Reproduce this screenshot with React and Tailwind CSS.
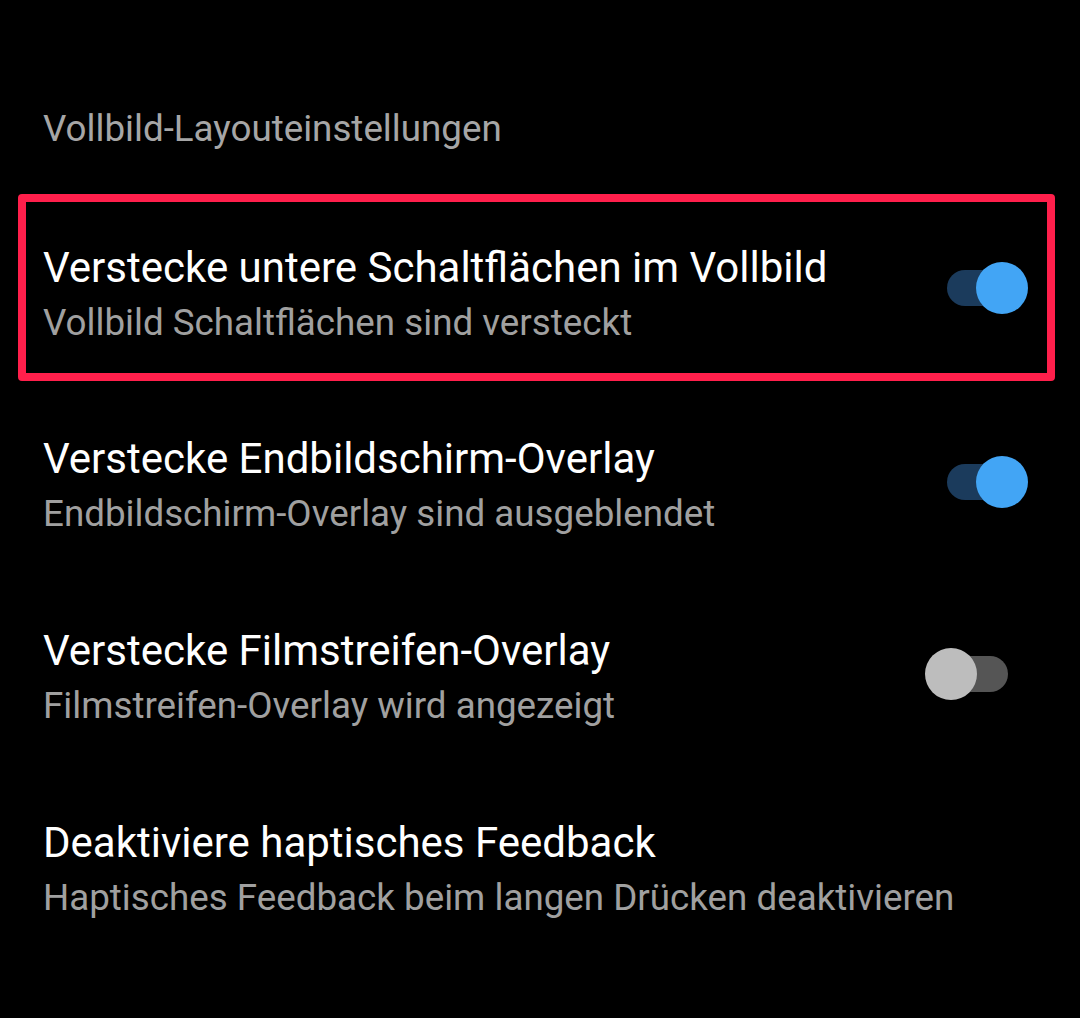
import React from 'react';

function Toggle({ on }) {
  return (
    <div className="relative w-[103px] h-[52px] shrink-0">
      <div className={`absolute left-[22px] top-[8px] w-[61px] h-[36px] rounded-full ${on ? 'bg-[#1b3b5c]' : 'bg-[#555555]'}`} />
      <div className={`absolute top-0 w-[52px] h-[52px] rounded-full ${on ? 'left-[51px] bg-[#42a5f5]' : 'left-0 bg-[#bdbdbd]'}`} />
    </div>
  );
}

function Row({ title, sub, toggle, on, shift = 'pt-[6px]' }) {
  return (
    <div className="flex items-center justify-between h-full">
      <div className={`flex flex-col ${shift}`}>
        <span className="text-white text-[42px] leading-[50px]">{title}</span>
        <span className="mt-[7px] text-[#a0a0a0] text-[36.75px] leading-[46px]">{sub}</span>
      </div>
      {toggle && <Toggle on={on} />}
    </div>
  );
}

export default function App() {
  return (
    <div className="w-[1080px] h-[1018px] bg-black overflow-hidden" style={{ fontFamily: 'Roboto, "Noto Sans", sans-serif' }}>
      <div className="h-[194px] pt-[107px] pl-[43px] text-[#a6a6a6] text-[36.75px] leading-[44px]">
        Vollbild-Layouteinstellungen
      </div>

      {/* hervorgehobene Zeile */}
      <div className="ml-[18px] mr-[25px] h-[187px] border-[8px] border-[#ff1f4b] rounded-[4px] pl-[17px] pr-[19px]">
        <Row title="Verstecke untere Schaltflächen im Vollbild" sub="Vollbild Schaltflächen sind versteckt" toggle on shift="pt-[13px]" />
      </div>

      <div className="mt-[5px] h-[192px] pl-[43px] pr-[52px]">
        <Row title="Verstecke Endbildschirm-Overlay" sub="Endbildschirm-Overlay sind ausgeblendet" toggle on />
      </div>
      <div className="h-[192px] pl-[43px] pr-[52px]">
        <Row title="Verstecke Filmstreifen-Overlay" sub="Filmstreifen-Overlay wird angezeigt" toggle on={false} />
      </div>
      <div className="h-[192px] pl-[43px] pr-[52px]">
        <Row title="Deaktiviere haptisches Feedback" sub="Haptisches Feedback beim langen Drücken deaktivieren" />
      </div>
    </div>
  );
}
